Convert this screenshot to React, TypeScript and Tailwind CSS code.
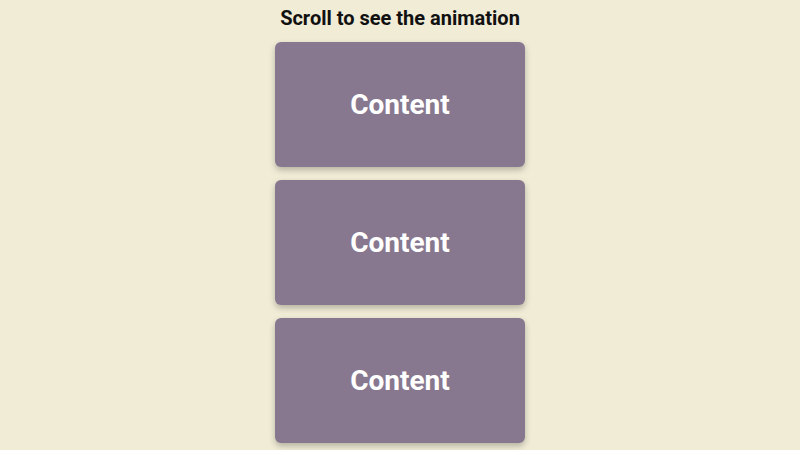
export default function App() {
  const boxes = [0, 1, 2];
  return (
    <div className="min-h-screen w-full bg-[#f0ecd6] flex flex-col items-center pt-[4px]" style={{ fontFamily: 'Roboto, "Noto Sans", sans-serif' }}>
      <h1 className="text-[20px] leading-[28px] font-bold text-[#111]">Scroll to see the animation</h1>
      <div className="mt-[10px] flex flex-col gap-[13px]">
        {boxes.map((b) => (
          <div key={b} className="w-[250px] h-[125px] rounded-[6px] bg-[#87788f] shadow-[0_3px_6px_rgba(0,0,0,0.25)] flex items-center justify-center">
            <span className="text-white font-bold text-[28px]">Content</span>
          </div>
        ))}
      </div>
    </div>
  );
}
